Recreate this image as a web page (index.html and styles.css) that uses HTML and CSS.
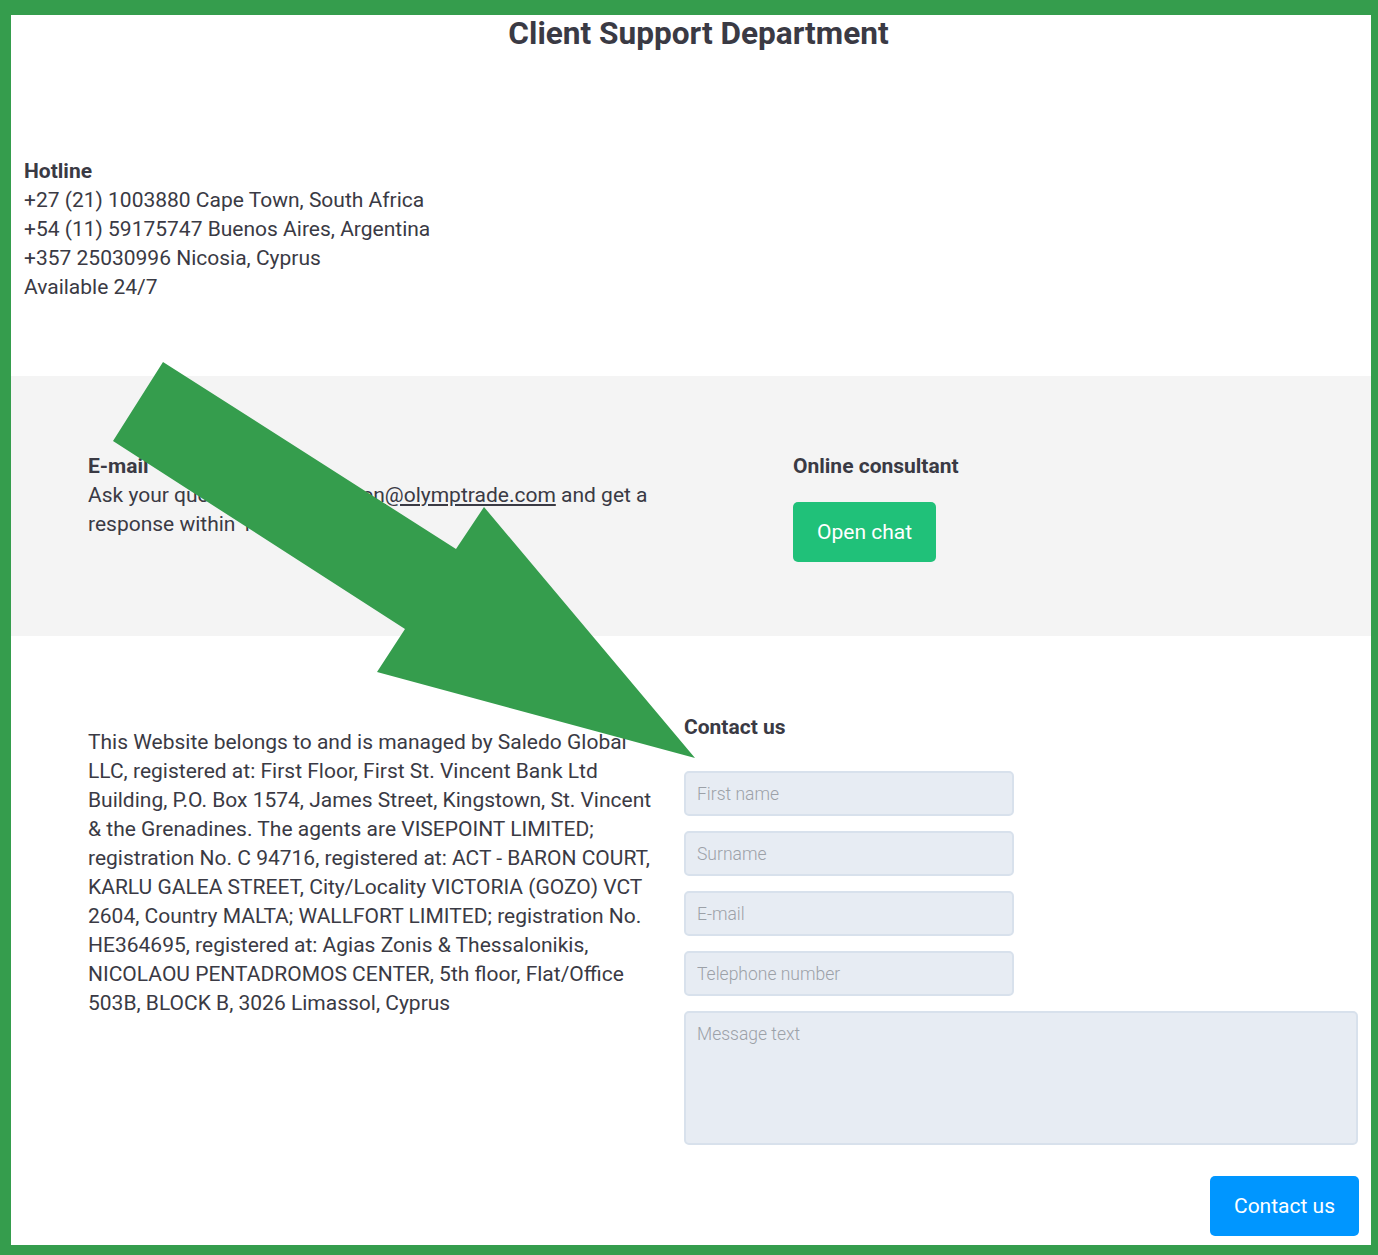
FILE: index.html
```html
<!DOCTYPE html>
<html lang="en">
<head>
    <meta charset="UTF-8">
    <meta name="viewport" content="width=device-width, initial-scale=1.0">
    <title>Client Support Department</title>
    <link rel="stylesheet" href="styles.css">
</head>
<body>
    <div class="page">
        <h1 class="title">Client Support Department</h1>

        <div class="hotline">
            <div class="label">Hotline</div>
            <div>+27 (21) 1003880 Cape Town, South Africa</div>
            <div>+54 (11) 59175747 Buenos Aires, Argentina</div>
            <div>+357 25030996 Nicosia, Cyprus</div>
            <div>Available 24/7</div>
        </div>

        <div class="band">
            <div class="email-block">
                <div class="label">E-mail</div>
                <p>Ask your question at <a href="#">support-en@olymptrade.com</a> and get a response within 1 hour.</p>
            </div>
            <div class="consult-block">
                <div class="label">Online consultant</div>
                <button type="button" class="btn btn-green">Open chat</button>
            </div>
        </div>

        <div class="bottom">
            <p class="legal">This Website belongs to and is managed by Saledo Global LLC, registered at: First Floor, First St. Vincent Bank Ltd Building, P.O. Box 1574, James Street, Kingstown, St. Vincent &amp; the Grenadines. The agents are VISEPOINT LIMITED; registration No. C 94716, registered at: ACT - BARON COURT, KARLU GALEA STREET, City/Locality VICTORIA (GOZO) VCT 2604, Country MALTA; WALLFORT LIMITED; registration No. HE364695, registered at: Agias Zonis &amp; Thessalonikis, NICOLAOU PENTADROMOS CENTER, 5th floor, Flat/Office 503B, BLOCK B, 3026 Limassol, Cyprus</p>

            <form class="contact-form">
                <div class="label">Contact us</div>
                <input type="text" class="field" placeholder="First name">
                <input type="text" class="field" placeholder="Surname">
                <input type="text" class="field" placeholder="E-mail">
                <input type="text" class="field" placeholder="Telephone number">
                <textarea class="field message" placeholder="Message text"></textarea>
                <div class="form-actions">
                    <button type="button" class="btn btn-blue">Contact us</button>
                </div>
            </form>
        </div>
    </div>

    <svg class="arrow" width="1378" height="1255" viewBox="0 0 1378 1255">
        <polygon points="163,362 456,549 484,507 695,758 377,672 405,629 113,441" fill="#359d4d"/>
    </svg>
</body>
</html>
```

FILE: styles.css
```css
/* Pagina de soporte */
body {
    margin: 0;
    padding: 15px 7px 10px 11px;
    background: #359d4d;
    font-family: Roboto, "Liberation Sans", sans-serif;
    font-size: 21px;
    line-height: 29px;
    color: #3a3a44;
    position: relative;
}

.page {
    background: #fff;
}

.title {
    margin: 0;
    padding-left: 15px;
    font-size: 31.6px;
    line-height: 38px;
    font-weight: 700;
    text-align: center;
}

.label {
    font-weight: 700;
}

.hotline {
    margin: 104px 0 74px;
    padding-left: 13px;
}

.band {
    background: #f4f4f4;
    padding: 76px 0 74px 77px;
    display: grid;
    grid-template-columns: 705px auto;
}

.band p {
    margin: 0;
    width: 575px;
}

.band a {
    color: inherit;
}

.consult-block .btn {
    margin-top: 21px;
}

.btn {
    height: 60px;
    padding: 0 24px;
    border: none;
    border-radius: 5px;
    font-family: inherit;
    font-size: 21px;
    color: #fff;
    cursor: pointer;
}

.btn-green {
    background: #20c179;
}

.btn-blue {
    background: #0096ff;
}

.bottom {
    padding: 77px 13px 9px 77px;
    display: grid;
    grid-template-columns: 596px 1fr;
}

.legal {
    margin: 15px 0 0;
    width: 570px;
}

.contact-form {
    display: flex;
    flex-direction: column;
}

.contact-form .label {
    margin-bottom: 29px;
}

.field {
    box-sizing: border-box;
    width: 330px;
    height: 45px;
    margin-bottom: 15px;
    padding: 0 11px;
    background: #e7ecf3;
    border: 2px solid #d8e1ec;
    border-radius: 5px;
    font-family: inherit;
    font-size: 17.5px;
    font-weight: 300;
    color: #3a3a44;
}

.field::placeholder {
    color: #9ca1a8;
}

.message {
    width: 100%;
    height: 134px;
    margin-bottom: 0;
    padding: 10px 11px;
    resize: none;
    line-height: 22px;
}

.form-actions {
    display: flex;
    justify-content: flex-end;
    margin-top: 31px;
    margin-right: -1px;
}

.arrow {
    position: absolute;
    top: 0;
    left: 0;
    pointer-events: none;
}
```
